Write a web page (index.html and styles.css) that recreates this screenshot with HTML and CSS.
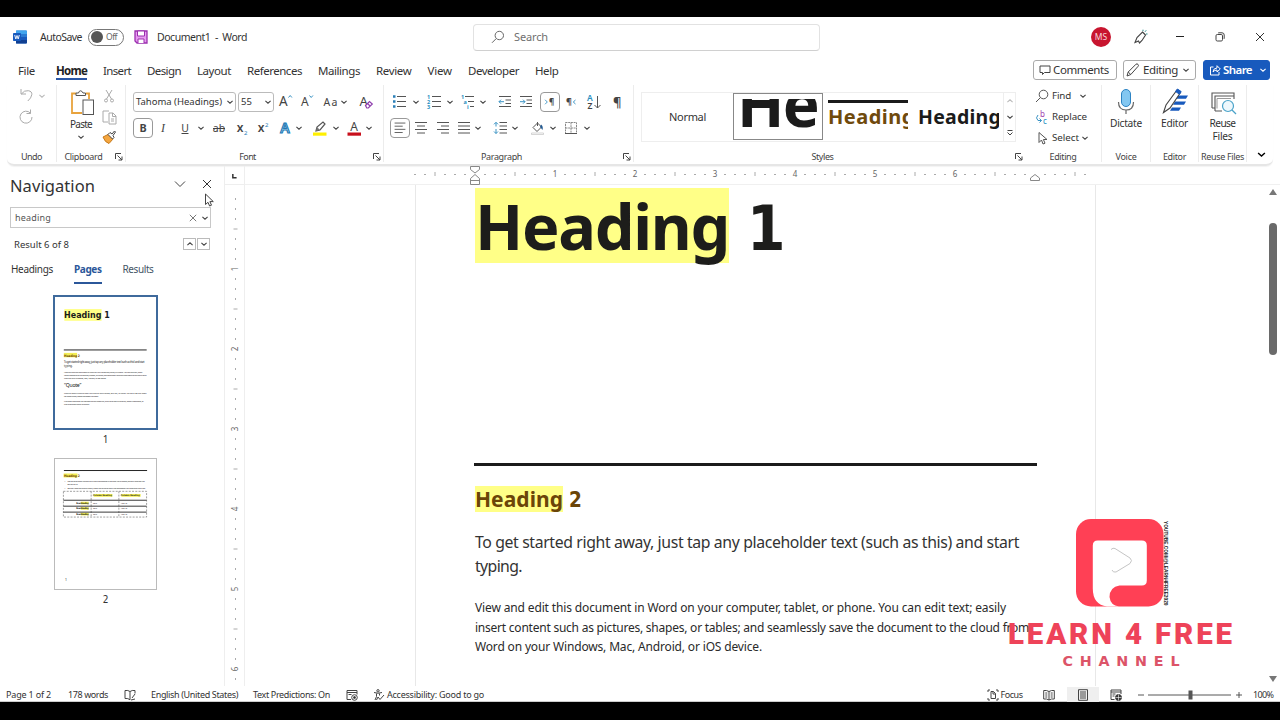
FILE: index.html
```html
<!DOCTYPE html>
<html lang="en">
<head>
<meta charset="utf-8">
<title>Document1 - Word</title>
<link rel="stylesheet" href="styles.css">
</head>
<body>
<svg class="sprite" aria-hidden="true">
  <symbol id="chev" viewBox="0 0 10 10"><path d="M2.4 3.8 5 6.2 7.6 3.8" fill="none" stroke="currentColor" stroke-width="1.1"/></symbol>
  <symbol id="launch" viewBox="0 0 10 10"><path d="M1.5 7V1.5H7M3.5 3.5 8 8M8 4.5V8H4.5" fill="none" stroke="#444" stroke-width="1"/></symbol>
  <symbol id="x" viewBox="0 0 10 10"><path d="M1 1 9 9M9 1 1 9" fill="none" stroke="currentColor" stroke-width="1"/></symbol>
</svg>
<div class="window">
  <header class="titlebar">
    <svg class="wordlogo" viewBox="0 0 14 14"><rect x="3" y="0.5" width="11" height="13" rx="1" fill="#2b7cd3"/><path d="M3 .5h10a1 1 0 0 1 1 1V4H3z" fill="#41a5ee"/><path d="M3 10h11v2.500a1 1 0 0 1-1 1H3z" fill="#103f91"/><path d="M3 7h11v3H3z" fill="#185abd"/><rect y="3" width="8" height="8" rx=".8" fill="#185abd"/><path d="M1.700 5 2.800 9 4 5.500 5.200 9 6.300 5" fill="none" stroke="#fff" stroke-width=".9"/></svg>
    <span class="autosave"><b data-w="42">AutoSave</b></span>
    <span class="toggle"><i></i><b data-w="11">Off</b></span>
    <svg class="save" viewBox="0 0 14 14"><path d="M1 1h12v12H3L1 11z" fill="#e79af0" stroke="#9a2fae" stroke-width="1.300"/><path d="M3.500 1h7v5h-7z" fill="#fff" stroke="#9a2fae"/><path d="M4 13V9h6v4" fill="#fff" stroke="#9a2fae"/></svg>
    <span class="docname"><b data-w="90">Document1&nbsp; -&nbsp; Word</b></span>
    <div class="search"><svg viewBox="0 0 14 14"><circle cx="8.300" cy="5.500" r="4.200"/><path d="M5.200 8.600 1 12.800"/></svg><b data-w="34">Search</b></div>
    <span class="avatar">MS</span>
    <svg class="pen" viewBox="0 0 16 16"><path d="M2 13.500 4 8.500 9.500 3l3 3L9 11.500 6.500 14 5.500 12zM9.500 3 12.500 6M2 13.500l3.500-1.500" fill="none" stroke="#444" stroke-width="1.100"/><path d="M10 2V.7M12 2.800l1.200-1.500M13 5h1.500" stroke="#2a8a8a" fill="none"/></svg>
    <svg class="wmin" viewBox="0 0 10 10"><path d="M1 4.500h8" stroke="#222"/></svg>
    <svg class="wmax" viewBox="0 0 10 10"><rect x="1" y="2.500" width="6.500" height="6.500" rx="1.300"/><path d="M3 1.200q.3-.4 1-.4h3q2.200 0 2.200 2.200v3q0 .7-.5 1"/></svg>
    <svg class="wclose" viewBox="0 0 10 10"><use href="#x"/></svg>
  </header>

  <nav class="tabs">
    <span><b data-w="17">File</b></span><span class="on"><b data-w="31">Home</b></span><span><b data-w="28">Insert</b></span><span><b data-w="34">Design</b></span><span><b data-w="34">Layout</b></span><span><b data-w="55">References</b></span><span><b data-w="42">Mailings</b></span><span><b data-w="35.500">Review</b></span><span><b data-w="24.500">View</b></span><span><b data-w="51">Developer</b></span><span><b data-w="23.500">Help</b></span>
    <div class="actions">
      <span class="btn comments"><svg viewBox="0 0 12 12"><path d="M1 2h10v6.500H5.500L3.500 10.500v-2H1z"/></svg><b data-w="56">Comments</b></span>
      <span class="btn editing"><svg viewBox="0 0 14 14"><path d="M1 13l1.200-4L10 1.200q1-.8 2 .2t0 2L4.800 11.500zM2.200 9l2.600 2.500"/></svg><b data-w="35">Editing</b><svg class="c"><use href="#chev"/></svg></span>
      <span class="btn share"><svg viewBox="0 0 12 12"><path d="M4.500 3H1.500v8h8.500V8M4 8q.3-4 4-4V1.700L11.300 5 8 8V6Q5.500 6 4 8z"/></svg><b data-w="29">Share</b><svg class="c"><use href="#chev"/></svg></span>
    </div>
  </nav>

  <section class="ribbon">
    <div class="group undo">
      <div class="area">
        <div class="undorow"><svg class="i" viewBox="0 0 20 20"><path d="M5 3v5h5M5.300 8q3-4 7-3.300t3.500 4-4 6.300" class="lt"/></svg><svg class="c lightc"><use href="#chev"/></svg></div>
        <svg class="i" viewBox="0 0 20 20"><path d="M14.500 3.500v4h-4M14.500 7.200A6 6 0 1 0 16 11" class="lt"/></svg>
      </div>
      <footer><b data-w="21">Undo</b></footer>
    </div>
    <div class="group clip">
      <div class="area">
        <div class="paste">
          <svg viewBox="0 0 24 26"><path d="M5 3.500H1V23h10M15 3.500h3V9" fill="none" stroke="#e8a33d" stroke-width="1.800"/><path d="M5 5.500V3h2.500Q8 .8 9.500.8T12 3h2.500v2.500z" fill="#fff" stroke="#555"/><rect x="12" y="10" width="10.500" height="14.500" fill="#fff" stroke="#555"/></svg>
          <b data-w="22">Paste</b><svg class="c"><use href="#chev"/></svg>
        </div>
        <div class="cliptools">
          <svg class="i" viewBox="0 0 20 20"><path d="M7 4l5.500 9M13 4 7.500 13" class="lt"/><circle cx="7" cy="14.500" r="1.500" class="lt"/><circle cx="13" cy="14.500" r="1.500" class="lt"/></svg>
          <svg class="i" viewBox="0 0 20 20"><path d="M9 15H4V4h6M10 6h4l3 3v8h-7zM13.500 6v3.500H17M12 12h3M12 14h3" class="lt"/></svg>
          <svg class="i" viewBox="0 0 20 20"><path d="M4 10l6-3 4 5-4 4.500q-4-1-6-6.500z" fill="#f4a640" stroke="#c77a1a"/><path d="M9 7.500l2-2 2 1.500 2.500-3 1 1L14 8.500l1 2-1.500 1.500z" fill="#fff" stroke="#444"/></svg>
        </div>
      </div>
      <footer><b data-w="38">Clipboard</b><svg class="l"><use href="#launch"/></svg></footer>
    </div>
    <div class="group font">
      <div class="area">
        <div class="r font1">
          <span class="combo"><b data-w="86">Tahoma (Headings)</b><svg class="c"><use href="#chev"/></svg></span>
          <span class="combo small"><b data-w="11">55</b><svg class="c"><use href="#chev"/></svg></span>
          <svg class="i" viewBox="0 0 20 20"><text x="3" y="14" class="g14">A</text><path d="M12.500 5.500l1.700-2 1.700 2" class="bl"/></svg>
          <svg class="i" viewBox="0 0 20 20"><text x="4" y="14" class="g12">A</text><path d="M12.500 3.500l1.700 2 1.700-2" class="bl"/></svg>
          <svg class="i" viewBox="0 0 20 20"><text x="3.500" y="14" class="g11" textLength="14">Aa</text></svg>
          <svg class="c"><use href="#chev"/></svg>
          <svg class="i" viewBox="0 0 20 20"><text x="3.500" y="14" class="g13">A</text><path d="M9.500 13.500l4-4 2.800 2.500-4 4h-1.500zM11.500 11.500l2.800 2.700" fill="#fff" stroke="#8f3fae" stroke-width="1.200"/></svg>
        </div>
        <div class="r font2">
          <svg class="i box" viewBox="0 0 20 20"><text x="10" y="14" class="g12 bold mid">B</text></svg>
          <svg class="i" viewBox="0 0 20 20"><text x="10" y="14" class="g12 it mid">I</text></svg>
          <svg class="i" viewBox="0 0 20 20"><text x="10" y="13.500" class="g11 mid">U</text><path d="M6.500 15.500h7" stroke="#444"/></svg>
          <svg class="c"><use href="#chev"/></svg>
          <svg class="i" viewBox="0 0 20 20"><text x="10" y="14" class="g11 mid">ab</text><path d="M4 10.500h12" stroke="#444"/></svg>
          <svg class="i" viewBox="0 0 20 20"><text x="8" y="14" class="g12 semi mid">x</text><text x="12" y="17" class="tinyb">2</text></svg>
          <svg class="i" viewBox="0 0 20 20"><text x="8" y="14" class="g12 semi mid">x</text><text x="12" y="9" class="tinyb">2</text></svg>
          <svg class="i" viewBox="0 0 20 20"><text x="10" y="15" class="fx mid">A</text></svg>
          <svg class="c"><use href="#chev"/></svg>
          <svg class="i" viewBox="0 0 20 20"><path d="M6 13l1-4 6-5 2 2-5 6z" fill="none" stroke="#555" stroke-width="1.200"/><path d="M6 13l1-4 3 3z" fill="#777"/><path d="M3 14.500h13.500v3.200H3z" fill="#ffef00"/></svg>
          <svg class="c"><use href="#chev"/></svg>
          <svg class="i" viewBox="0 0 20 20"><text x="10" y="13" class="g12 mid">A</text><path d="M3.500 14.500H17v3.200H3.500z" fill="#c8101c"/></svg>
          <svg class="c"><use href="#chev"/></svg>
        </div>
      </div>
      <footer><b data-w="16.500">Font</b><svg class="l"><use href="#launch"/></svg></footer>
    </div>
    <div class="group para">
      <div class="area">
        <div class="r para1">
          <svg class="i" viewBox="0 0 20 20"><path d="M8 4.500h9M8 9.500h9M8 14.500h9" class="dk"/><path d="M4 3.300h2.500v2.500H4zM4 8.300h2.500v2.500H4zM4 13.300h2.500v2.500H4z" fill="#2a7fb8"/></svg>
          <svg class="c"><use href="#chev"/></svg>
          <svg class="i" viewBox="0 0 20 20"><path d="M8 4.500h9M8 9.500h9M8 14.500h9" class="dk"/><text x="3" y="6.500" class="num">1</text><text x="3" y="11.500" class="num">2</text><text x="3" y="16.500" class="num">3</text></svg>
          <svg class="c"><use href="#chev"/></svg>
          <svg class="i" viewBox="0 0 20 20"><path d="M7 4.500h9M10 9.500h6M12 14.500h4" class="dk"/><text x="3" y="6.500" class="num">1</text><text x="5.500" y="11.500" class="num">a</text><text x="9" y="16.500" class="num">i</text></svg>
          <svg class="c"><use href="#chev"/></svg>
          <svg class="i" viewBox="0 0 20 20"><path d="M4 4.500h12M10.500 8H16M10.500 11.500H16M4 14.500h12" class="dk"/><path d="M9 9.700H4M6 7.700l-2 2 2 2" class="bl"/></svg>
          <svg class="i" viewBox="0 0 20 20"><path d="M4 4.500h12M10.500 8H16M10.500 11.500H16M4 14.500h12" class="dk"/><path d="M4 9.700h5M7 7.700l2 2-2 2" class="bl"/></svg>
          <svg class="i box" viewBox="0 0 20 20"><path d="M4.500 7.500 7 10l-2.500 2.500" class="bl"/><text x="9" y="13" class="pil">¶</text></svg>
          <svg class="i" viewBox="0 0 20 20"><text x="5" y="13" class="pil">¶</text><path d="M14.500 8 12.300 10l2.200 2" class="bl"/></svg>
          <svg class="i" viewBox="0 0 20 20"><text x="3" y="9" class="sort b">A</text><text x="3.500" y="17" class="sort">Z</text><path d="M13.500 4v12M10.500 13l3 3 3-3" class="dk"/></svg>
          <svg class="i" viewBox="0 0 20 20"><text x="6" y="14.500" class="pilbig">¶</text></svg>
        </div>
        <div class="r para2">
          <svg class="i box" viewBox="0 0 20 20"><path d="M4 4.500h12M4 8h9M4 11.500h12M4 15h9" class="dk"/></svg>
          <svg class="i" viewBox="0 0 20 20"><path d="M4 4.500h12M6 8h8M4 11.500h12M6 15h8" class="dk"/></svg>
          <svg class="i" viewBox="0 0 20 20"><path d="M4 4.500h12M8 8h8M4 11.500h12M8 15h8" class="dk"/></svg>
          <svg class="i" viewBox="0 0 20 20"><path d="M4 4.500h12M4 8h12M4 11.500h12M4 15h12" class="dk"/></svg>
          <svg class="c"><use href="#chev"/></svg>
          <svg class="i" viewBox="0 0 20 20"><path d="M9.500 4.500H17M9.500 8H17M9.500 11.500H17M9.500 15H17" class="dk"/><path d="M6 4.500v4M6 11v4.500M4 6.300 6 4.300l2 2M4 13.500l2 2 2-2" class="bl"/></svg>
          <svg class="c"><use href="#chev"/></svg>
          <svg class="i" viewBox="0 0 20 20"><path d="M6 9.500 10.500 5l4 4-4.500 4.500zM10.500 8V4" class="dk"/><path d="M14 6.500q2.500 1.500 1.500 5.500-1.500-2-2.500-3z" fill="#235a92"/><path d="M4.500 15h12v1.500h-12z" fill="#fff" stroke="#bbb" stroke-width=".6"/></svg>
          <svg class="c"><use href="#chev"/></svg>
          <svg class="i" viewBox="0 0 20 20"><path d="M4.500 4.500h11v11h-11zM10 4.500v11M4.500 10h11" fill="none" stroke="#888" stroke-dasharray="2 .7"/><path d="M4 15.500h12" class="dk"/></svg>
          <svg class="c"><use href="#chev"/></svg>
        </div>
      </div>
      <footer><b data-w="41">Paragraph</b><svg class="l"><use href="#launch"/></svg></footer>
    </div>
    <div class="group styles">
      <div class="gallery">
        <span class="normal"><b data-w="37">Normal</b></span>
        <span class="h1s"><em><b data-w="81">He</b></em></span>
        <span class="h2s"><em><b data-w="87">Heading</b></em></span>
        <span class="h3s"><em><b data-w="83">Heading</b></em></span>
        <span class="scroll"><svg class="c lightc up"><use href="#chev"/></svg><svg class="c"><use href="#chev"/></svg><svg class="c more" viewBox="0 0 10 10"><path d="M2.500 2.500h5M2.500 4.500 5 7l2.500-2.500" fill="none" stroke="#444"/></svg></span>
      </div>
      <footer><b data-w="22">Styles</b><svg class="l"><use href="#launch"/></svg></footer>
    </div>
    <div class="group edit">
      <div class="area">
        <span><svg viewBox="0 0 14 14"><circle cx="8.500" cy="5.500" r="4.300"/><path d="M5.500 8.500 1 13"/></svg><b data-w="19">Find</b><svg class="c far"><use href="#chev"/></svg></span>
        <span><svg viewBox="0 0 14 14"><text x="5" y="7" class="rb">b</text><text x="8" y="13.500" class="rc">c</text><path d="M3 5Q0 8 3 10.500h3.500M4.500 8.500l2 2-2 2" class="bl"/></svg><b data-w="35">Replace</b></span>
        <span><svg viewBox="0 0 14 14"><path d="M4 1.500v10l2.500-2.500 1.500 4 2-.8-1.600-3.700H12z"/></svg><b data-w="27">Select</b><svg class="c"><use href="#chev"/></svg></span>
      </div>
      <footer><b data-w="27">Editing</b></footer>
    </div>
    <div class="group big dict"><div class="area"><svg viewBox="0 0 28 28"><path d="M6.500 14q0 8 7.500 8t7.500-8M14 22v4" fill="none" stroke="#666" stroke-width="1.200"/><rect x="9.500" y="1.500" width="9" height="17" rx="4.500" fill="#83c7f1" stroke="#2c83c3"/></svg><b data-w="32">Dictate</b></div><footer><b data-w="21">Voice</b></footer></div>
    <div class="group big edr"><div class="area"><svg viewBox="0 0 28 28"><path d="M17 7.500h10l-2 3.200H15zM14 13.500h11l-2 3.200H12zM11 19.500h9l-2 3.200H9z" fill="#185abd"/><path d="M2.500 24.500 5 17 16 2l3.500 2.500L9 20z" fill="#fff" stroke="#444" stroke-width="1.100"/><path d="M14.500 3.500 16.500 1l3.700 2.600-1.700 2.600z" fill="#185abd" stroke="#185abd"/></svg><b data-w="27">Editor</b></div><footer><b data-w="23">Editor</b></footer></div>
    <div class="group big reuse"><div class="area"><svg viewBox="0 0 28 28"><path d="M3 20V5h22v6M6 23V8h19M3 20h3M6 23h7" fill="none" stroke="#555" stroke-width="1.100"/><path d="M8 20.500V10.500h14" stroke="#999" fill="none"/><circle cx="19" cy="18" r="5.500" fill="#eef8fd" stroke="#4aa3c9" stroke-width="1.200"/><path d="M23 22l4 4" stroke="#4aa3c9" stroke-width="1.200"/></svg><b data-w="26">Reuse</b><b data-w="20">Files</b></div><footer><b data-w="43">Reuse Files</b></footer></div>
    <div class="collapse"><svg class="c"><use href="#chev"/></svg></div>
  </section>

  <main>
    <aside class="nav">
      <div class="navhead"><b data-w="85">Navigation</b><svg class="nchev" viewBox="0 0 12 12"><path d="M1 3.500l5 5 5-5"/></svg><svg class="nx" viewBox="0 0 10 10"><use href="#x"/></svg></div>
      <div class="find"><b data-w="36">heading</b><svg class="fx1" viewBox="0 0 10 10"><use href="#x"/></svg><svg class="c"><use href="#chev"/></svg></div>
      <div class="result"><b data-w="55">Result 6 of 8</b><i><svg class="c up"><use href="#chev"/></svg></i><i><svg class="c"><use href="#chev"/></svg></i></div>
      <div class="navtabs"><span><b data-w="42">Headings</b></span><span class="on"><b data-w="27.500">Pages</b></span><span><b data-w="31">Results</b></span></div>
      <svg class="thumb sel" viewBox="0 0 103 133">
        <rect x="9.500" y="12" width="38" height="12" fill="#ffff87"/><text x="9.300" y="21.300" class="tb" font-size="9.400" textLength="46.500" lengthAdjust="spacingAndGlyphs">Heading 1</text>
        <path d="M9 53.700h84.500" stroke="#222"/>
        <rect x="9" y="56.700" width="13.500" height="4.500" fill="#f4ee55"/><text x="9.300" y="60.400" class="tb h" font-size="3.400" textLength="16">Heading 2</text>
        <g class="tt" font-size="2.700"><text x="9.300" y="67.400" textLength="82">To get started right away, just tap any placeholder text (such as this) and start</text><text x="9.300" y="70.900">typing.</text></g>
        <g class="tt soft" font-size="2"><text x="9.300" y="76.900" textLength="80">View and edit this document in Word on your computer, tablet, or phone. You can edit text; easily</text><text x="9.300" y="79.900" textLength="84">insert content such as pictures, shapes, or tables; and seamlessly save the document to the cloud from</text><text x="9.300" y="82.900" textLength="43">Word on your Windows, Mac, Android, or iOS device.</text></g>
        <text x="9.300" y="91" class="tt" font-size="5.200" textLength="17.500">“Quote”</text>
        <g class="tt soft" font-size="2"><text x="9.300" y="98.900" textLength="84">Want to insert a picture from your files or add a shape, text box, or table? You got it! On the Insert</text><text x="9.300" y="101.900" textLength="35">tab of the ribbon, just tap the option you need.</text><text x="9.300" y="106.400" textLength="81">Find even more easy-to-use tools on the Insert tab, such as to add a hyperlink, insert a comment, or</text><text x="9.300" y="109.400" textLength="26">add automatic page numbers.</text></g>
      </svg>
      <div class="pn">1</div>
      <svg class="thumb" viewBox="0 0 102 131">
        <path d="M9 11.500h84" stroke="#222"/>
        <rect x="8.700" y="14.500" width="14" height="4" fill="#f4ee55"/><text x="9" y="17.800" class="tb h" font-size="3.400" textLength="16">Heading 2</text>
        <g class="tt soft" font-size="2"><text x="9.500" y="23.500">•</text><text x="12.500" y="23.500" textLength="78">Use styles to easily format your Word documents in no time. For example, this text uses the List</text><text x="12.500" y="26.200">Bullet style.</text><text x="9.500" y="30.200">•</text><text x="12.500" y="30.200" textLength="79">On the Home tab of the ribbon, check out Styles to apply the formatting you want with just a tap.</text></g>
        <g fill="#f4ee55"><rect x="39" y="35.200" width="19" height="2.800"/><rect x="67" y="35.200" width="19.500" height="2.800"/><rect x="26" y="43" width="8" height="2.600"/><rect x="26" y="48.500" width="8" height="2.600"/><rect x="26" y="54.200" width="8" height="2.600"/></g>
        <path d="M8.500 32.500h84v26H8.500zM36.500 32.500v26M64.500 32.500v26" fill="none" stroke="#777" stroke-width=".7" stroke-dasharray="2 1.300"/>
        <path d="M8.500 41.500h84M8.500 47.500h84M8.500 53.500h84" stroke="#222" stroke-width=".9"/>
        <g class="tb" font-size="2.300"><text x="38.500" y="37.500" textLength="19">Column Heading</text><text x="66.500" y="37.500" textLength="19">Column Heading</text><text x="21.500" y="45" textLength="12.500">Row Heading</text><text x="21.500" y="50.500" textLength="12.500">Row Heading</text><text x="21.500" y="56.200" textLength="12.500">Row Heading</text></g>
        <g class="tt soft" font-size="2.100"><text x="38.500" y="45">Text</text><text x="66.500" y="45">123.45</text><text x="38.500" y="50.500">Text</text><text x="66.500" y="50.500">123.45</text><text x="38.500" y="56.200">Text</text><text x="66.500" y="56.200">123.45</text><text x="10" y="123.500" font-size="3.500">1</text></g>
      </svg>
      <div class="pn two">2</div>
      <svg class="cursor" viewBox="0 0 12 15"><path d="M1.500 1v10.500l2.500-2.200 1.600 3.700 1.900-.8-1.600-3.600h3.400z" fill="#fff" stroke="#444"/></svg>
    </aside>
    <div class="vruler"><span class="tabsel"><svg viewBox="0 0 6 6"><path d="M1 0v4.500h4.500" fill="none" stroke="#333" stroke-width="1.800"/></svg></span><svg id="vr" width="20" height="501"></svg></div>
    <div class="canvas">
      <div class="hruler"><svg id="hr" width="1035" height="20"></svg></div>
      <article class="page">
        <h1><span class="mark"><b data-w="254">Heading</b></span><b class="one">1</b></h1>
        <div class="rule"></div>
        <h2><span class="mark"><b data-w="88">Heading</b></span><b class="two">2</b></h2>
        <p class="lead"><b data-w="544">To get started right away, just tap any placeholder text (such as this) and start</b><br><b data-w="47">typing.</b></p>
        <p class="text"><b data-w="531">View and edit this document in Word on your computer, tablet, or phone. You can edit text; easily</b><br><b data-w="554">insert content such as pictures, shapes, or tables; and seamlessly save the document to the cloud from</b><br><b data-w="287">Word on your Windows, Mac, Android, or iOS device.</b></p>
      </article>
      <div class="vscroll"><i class="ua"></i><i class="th"></i><i class="da"></i></div>
    </div>
  </main>

  <footer class="status">
    <b data-w="45">Page 1 of 2</b><b data-w="40">178 words</b>
    <svg viewBox="0 0 12 12"><path d="M6 2.500Q4 1 1 1.500v8q3-.5 5 1.300V2.500Q8 1 11 1.500v3M8 9l3-4M7 11l4-1"/></svg>
    <b data-w="87">English (United States)</b><b data-w="77">Text Predictions: On</b>
    <svg viewBox="0 0 12 12"><path d="M5 10.500H1V1.500h10v4M1 3.500h10M2.500 5.500h3"/><circle cx="8.500" cy="8.500" r="2.800"/><circle cx="8.500" cy="8.500" r="1" fill="#333"/></svg>
    <svg viewBox="0 0 12 12"><circle cx="5" cy="1.800" r="1.200"/><path d="M1 3.500q4 1.500 8 0M3.500 4.500v3L2 11M6.500 4.500v2M5 8l2 2.500 4-4.500M5 8l-1.500 3"/></svg>
    <b data-w="97">Accessibility: Good to go</b>
    <div class="views">
      <svg viewBox="0 0 12 12"><path d="M3 1H1v2M9 1h2v2M1 9v2h2M11 9v2H9M4 2.500h2.500L8.500 4.500V9.500H4zM6 2.500V5h2.500"/></svg><b data-w="22">Focus</b>
      <svg class="v2" viewBox="0 0 12 12"><path d="M6 2.500Q3.500 1 .7 1.500v8.500q3-.5 5.300 1 2.300-1.500 5.300-1V1.500Q8.500 1 6 2.500V11M2.300 4h2M2.300 6h2M2.300 8h2M7.700 4h2M7.700 6h2M7.700 8h2"/></svg>
      <span class="print"><svg viewBox="0 0 12 12"><path d="M1.500.7h9v10.600h-9zM3 3h6M3 5h6M3 7h6M3 9h6"/></svg></span>
      <svg class="v3" viewBox="0 0 12 12"><path d="M4.500 10.500H1V1h10v4M1 3h10M2.500 5h3M2.500 7h2"/><circle cx="8.500" cy="8.500" r="3" fill="#333"/><path d="M5.500 8.500h6M8.500 5.500v6" stroke="#fff" stroke-width=".6"/></svg>
      <svg class="zoom" viewBox="0 0 104 12"><path d="M0 6h6M10 6h83M98 6h6M101 3v6" stroke-width=".9"/><path d="M50.500 1.500h4v9h-4z" fill="#555" stroke="none"/></svg>
      <b data-w="20.500">100%</b>
    </div>
  </footer>
</div>
<svg class="channel" viewBox="0 0 230 160">
  <rect x="70" y="6" width="87.500" height="87.500" rx="15" fill="#ff4055"/>
  <path d="M86.800 32.500q0-5 5-5h44q5 0 5 5v35q0 5-5 5H113.500q-9.800 1.500-10 11.500 1 8.500 9.500 9.500H101q-14.200-2-14.200-18z" transform="matrix(1 0 0 1 0 0)" fill="#fff"/>
  <path d="M105 36.500q2-2 4-1l15 9.500q3 2.500 0 5.500l-14 8.500q-3 .8-4-2" fill="none" stroke="#c5c5c5"/>
  <text transform="translate(158 8) rotate(90)" class="yt" textLength="84.500" lengthAdjust="spacingAndGlyphs">YOUTUBE.COM/@LEARN4FREE2020</text>
  <text x="2" y="131.300" class="l4" textLength="224">LEARN 4 FREE</text>
  <text x="56.500" y="153" class="ch" textLength="117">CHANNEL</text>
</svg>
<script src="app.js"></script>
</body>
</html>
```
FILE: styles.css
```css
* { box-sizing: border-box; }
body { margin: 0; width: 1280px; height: 720px; overflow: hidden; background: #000; padding: 17px 0 18px; font: 12px/16px "Noto Sans", "Open Sans", sans-serif; color: #333; }
b { font-weight: inherit; white-space: nowrap; display: inline-block; }
svg { flex: none; display: block; overflow: visible; }
.sprite { position: absolute; width: 0; height: 0; }
.window { height: 685px; background: #fff; display: flex; flex-direction: column; }
.i { width: 20px; height: 20px; }
.c { width: 10px; height: 10px; color: #444; }
.l { width: 10px; height: 10px; }
.lightc { color: #bbb; }
.up { transform: rotate(180deg); }

/* title bar */
.titlebar { height: 40px; display: flex; align-items: center; padding-left: 13px; font-size: 10.500px; }
.titlebar svg { fill: none; stroke: #444; }
.titlebar .wordlogo { width: 14px; height: 14px; stroke: none; }
.titlebar .wordlogo path:last-child { stroke: #fff; }
.autosave { width: 61px; padding-left: 13px; }
.toggle { width: 36px; height: 17px; border: 1px solid #777; border-radius: 9px; display: flex; align-items: center; padding-left: 2px; gap: 3px; font-size: 8.500px; color: #666; }
.toggle i { width: 12px; height: 12px; border-radius: 50%; background: #555; }
.save { width: 14px; height: 14px; margin: 0 9px 0 10px; }
.docname { width: 316px; }
.search { width: 347px; height: 27px; border: 1px solid #e2e2e2; border-bottom-color: #d0d0d0; border-radius: 4px; display: flex; align-items: center; padding-left: 17px; gap: 9px; font-size: 11px; color: #707070; }
.search svg { width: 14px; height: 14px; stroke: #666; }
.avatar { margin-left: 271px; width: 20px; height: 20px; border-radius: 50%; background: #c8152f; color: #f6d5da; font-size: 8.500px; line-height: 20px; text-align: center; }
.pen { width: 16px; height: 16px; margin-left: 22px; }
.wmin { width: 10px; height: 10px; margin-left: 26px; }
.wmax { width: 10px; height: 10px; margin-left: 30px; }
.wclose { width: 10px; height: 10px; margin-left: 30px; color: #333; }

/* tabs */
.tabs { height: 28px; display: flex; padding-left: 18px; gap: 16px; font-size: 11.500px; line-height: 27px; }
.tabs > span { height: 23px; flex: none; }
.tabs > span:first-child { margin-right: 5px; }
.tabs .on { font-weight: 700; color: #222; border-bottom: 2px solid #2b57a5; }
.actions { margin: 3px 10px 0 auto; display: flex; gap: 6px; line-height: 18px; font-size: 11.500px; }
.btn { height: 20px; border: 1px solid #aaa; border-radius: 3px; display: flex; align-items: center; }
.btn svg { fill: none; stroke: #444; width: 12px; height: 12px; }
.btn svg.c { width: 10px; height: 10px; }
.comments { width: 84px; padding-left: 5px; gap: 2px; }
.editing { width: 73px; padding-left: 2px; gap: 3px; }
.editing svg:first-child { width: 14px; height: 14px; }
.editing .c, .share .c { margin-left: auto; margin-right: 4px; }
.share { width: 67px; margin-left: 1px; background: #185abd; border-color: #185abd; color: #fff; padding-left: 5px; gap: 2px; font-weight: 600; }
.share svg { stroke: #fff; color: #fff; }
.share .c { margin-right: 1px; }

/* ribbon */
.ribbon { height: 81px; margin: 0 7px; display: flex; border-bottom: 2px solid #e6e6e6; border-radius: 0 0 7px 7px; box-shadow: 0 1px 1px #f3f3f3; }
.group { height: 77px; border-right: 1px solid #ececec; display: flex; flex-direction: column; justify-content: space-between; flex: none; }
.group > footer { height: 13px; line-height: 13px; font-size: 9px; text-align: center; position: relative; margin-bottom: -1px; color: #444; }
.group > footer .l { position: absolute; right: 1px; top: 2px; }
.undo { width: 50px; }
.undo .area { padding: 1px 0 0 9px; }
.undorow { display: flex; align-items: center; gap: 1px; }
.lt { fill: none; stroke: #aaa; stroke-width: 1; }
.dk { fill: none; stroke: #555; stroke-width: 1; }
.bl { fill: none; stroke: #3a93c4; stroke-width: 1; }
.clip { width: 69px; }
.clip > footer { padding-right: 15px; }
.clip .area { display: flex; padding-left: 11px; }
.paste { width: 26px; display: flex; flex-direction: column; align-items: center; font-size: 10px; padding-top: 5px; }
.paste > svg:first-child { width: 24px; height: 26px; margin-left: 3px; }
.cliptools { margin-left: 5px; padding-top: 1px; }
.cliptools .i { margin-bottom: .5px; }
.r { display: grid; height: 20px; align-items: center; }
.font { width: 258px; }
.font .area, .para .area { padding-top: 7px; display: flex; flex-direction: column; gap: 6px; }
.font > footer { padding-right: 14px; }
.font1 { padding-left: 7px; grid-template-columns: 105px 38px 21px 23px 19px 17px 20px; }
.font2 { padding-left: 7px; grid-template-columns: 20px 22px 21px 13px 23px 21px 22px 19px 16px 21px 13px 20px 10px; }
.combo { width: 103px; height: 20px; border: 1px solid #bbb; border-radius: 3px; display: flex; align-items: center; padding-left: 2px; font-size: 9.500px; justify-content: space-between; }
.combo.small { width: 36px; }
.box { border: 1px solid #999; border-radius: 4px; }
.g14 { font-size: 13.500px; } .g13 { font-size: 13px; } .g12 { font-size: 12px; } .g11 { font-size: 10.500px; }
svg text { fill: #444; }
.mid { text-anchor: middle; }
.bold { font-weight: 700; } .semi { font-weight: 600; } .it { font-style: italic; font-family: "Liberation Serif", serif; }
svg text.tinyb { font-size: 6px; fill: #2a7fb8; }
svg text.fx { font-size: 14px; font-weight: 600; fill: #cfe8f8; stroke: #2079b5; stroke-width: 1.100; }
svg text.num { font-size: 5.500px; fill: #2a8fc0; font-weight: 700; }
svg text.pil { font-size: 9px; font-weight: 700; }
svg text.pilbig { font-size: 13px; font-weight: 600; }
svg text.sort { font-size: 8.500px; font-weight: 600; } svg text.sort.b { fill: #2a8fc0; }
.para { width: 250px; }
.para > footer { padding-right: 14px; }
.para1 { padding-left: 5px; grid-template-columns: 22px 13px 21px 13px 20px 17px 21px 24px 21px 23px 23px 20px; }
.para2 { padding-left: 6px; grid-template-columns: 21px 22px 21px 19px 17px 20px 17px 21px 13px 21px 10px; }
.styles { width: 391px; border-right: 0; }
.styles > footer { padding-right: 14px; }
.gallery { margin: 7px 0 0 7px; width: 375px; height: 50px; border: 1px solid #eee; display: flex; }
.gallery > span { flex: none; overflow: hidden; }
.gallery em { font-style: normal; display: block; overflow: hidden; }
.normal { width: 91px; text-align: center; line-height: 48px; font-size: 11px; }
.h1s { width: 90px; height: 47px; border: 1px solid #888; font: bold 62px/8px "Noto Sans", sans-serif; color: #1b1b1b; padding: 5px 4px 0 3px; }
.h1s em { height: 34px; }
.h2s { width: 90px; font: bold 20px/24px "Noto Sans", sans-serif; color: #6f4a0c; padding: 7px 5px 0 5px; }
.h2s em { border-top: 3px solid #1b1b1b; padding-top: 2px; width: 80px; height: 31px; }
.h3s { width: 90px; font: bold 19.500px/24px "Noto Sans", sans-serif; color: #1b1b1b; padding: 12px 3px 0 5px; }
.h3s em { width: 81px; }
.scroll { width: 12px; display: flex; flex-direction: column; justify-content: space-around; align-items: center; border-left: 1px solid #eee; }
.edit { width: 77px; }
.edit .area { padding: 0 0 0 10px; font-size: 9.800px; }
.edit .area span { display: flex; align-items: center; height: 21.200px; gap: 3px; }
.edit .area svg { width: 14px; height: 14px; fill: none; stroke: #555; }
.edit .area svg.c { width: 10px; height: 10px; margin-left: -2px; }
.edit .area svg.far { margin-left: 4px; }
svg text.rb { font-size: 8px; fill: #a03fb0; stroke: none; } svg text.rc { font-size: 8px; fill: #2a8fc0; stroke: none; }
.edit .area .bl { stroke: #3a93c4; }
.big { width: 48px; }
.dict { width: 49px; }
.big .area { display: flex; flex-direction: column; align-items: center; font-size: 10.200px; line-height: 13px; padding-top: 3px; }
.big .area svg { width: 28px; height: 28px; margin-bottom: 1px; }
.big .area { white-space: nowrap; }
.collapse { padding: 63px 0 0 8px; }
.collapse .c { width: 13px; height: 13px; color: #000; }

/* navigation pane */
main { height: 520px; display: flex; }
.nav { width: 225px; border-right: 1px solid #eee; padding: 9px 13px 0 10px; position: relative; flex: none; }
.navhead { height: 22px; display: flex; align-items: center; font-size: 16.500px; }
.nchev { width: 12px; height: 12px; margin-left: 79px; margin-top: -5px; fill: none; stroke: #444; }
.nx { width: 10px; height: 10px; margin: -5px 0 0 16px; }
.find { width: 201px; height: 21px; margin-top: 10px; border: 1px solid #c8c8c8; display: flex; align-items: center; padding-left: 4px; font-size: 9px; color: #555; }
.fx1 { width: 8px; height: 8px; margin: 0 3px 0 auto; }
.result { display: flex; height: 14px; margin: 9px 0 0 4px; align-items: center; font-size: 9.500px; width: 196px; gap: 1px; }
.result b { margin-right: auto; padding-top: 2px; }
.result i { width: 13px; height: 12px; border: 1px solid #bbb; display: grid; place-items: center; }
.navtabs { display: flex; margin: 9px 0 0 1px; gap: 21px; font-size: 10px; line-height: 18px; height: 24px; }
.navtabs .on { font-weight: 700; color: #2b579a; border-bottom: 2px solid #2b579a; }
.navtabs span:last-child { color: #456; }
.thumb { width: 103px; height: 132px; border: 1px solid #bbb; margin: 0 0 0 44px; }
.thumb.sel { border: 2px solid #3f6a9c; width: 105px; height: 135px; margin: 11px 0 0 43px; }
.pn { width: 103px; margin-left: 44px; text-align: center; font-size: 10px; line-height: 18px; height: 28px; }
.pn.two { padding-top: 1px; }
svg .tb, svg .tb text { font-family: "DejaVu Sans Condensed", "DejaVu Sans", sans-serif; font-weight: 700; fill: #1b1b1b; }
svg .tb.h { fill: #6f4a0c; }
svg .tt, svg .tt text { font-family: "Noto Sans", sans-serif; fill: #111; }
svg .soft text { fill: #222; }
.cursor { position: absolute; left: 204px; top: 27px; width: 12px; height: 15px; }

/* document */
.vruler { width: 20px; border-right: 1px solid #eee; flex: none; }
.tabsel { display: block; height: 19px; padding: 8px 0 0 7px; border-bottom: 1px solid #eee; }
.tabsel svg { width: 5px; height: 5px; }
#vr text, #hr text { font-size: 8px; fill: #666; text-anchor: middle; }
#vr path, #hr path { stroke: #aaa; fill: none; }
.canvas { flex: 1; position: relative; overflow: hidden; }
.hruler { height: 19px; border-bottom: 1px solid #f0f0f0; }
.page { margin-left: 170px; width: 681px; height: 501px; border: solid #e8e8e8; border-width: 0 1px; padding: 3px 0 0 59px; color: #333; }
h1, h2, p { margin: 0; font-weight: 400; }
h1 { font-size: 63px; line-height: 75px; font-weight: 700; color: #1d1d1b; display: flex; align-items: baseline; height: 75px; }
.mark { background: #ffff87; }
.one, .two { font-family: "DejaVu Sans Condensed", "DejaVu Sans", sans-serif; }
h1 .one { margin-left: 18px; font-size: 61.500px; }
.rule { height: 3px; width: 563px; background: #1b1b1b; margin: 200px 0 0 -1px; }
h2 { font-size: 21px; line-height: 26px; font-weight: 700; color: #6b4508; display: flex; align-items: baseline; height: 26px; margin-top: 20px; }
h2 .two { margin-left: 6px; font-size: 20.500px; }
.lead { font-size: 15.800px; line-height: 24px; margin-top: 18px; }
.text { font-size: 12px; line-height: 19.500px; margin-top: 20px; color: #2a2a2a; }
.vscroll { position: absolute; right: 3px; top: 0; width: 9px; height: 520px; display: flex; flex-direction: column; align-items: center; padding: 23px 0 4px; }
.ua { border: 4px solid transparent; border-top: 0; border-bottom: 6px solid #777; }
.th { width: 8px; height: 132px; border-radius: 4px; background: #6a6a6a; margin-top: 28px; }
.da { border: 4px solid transparent; border-bottom: 0; border-top: 6px solid #777; margin-top: auto; }

/* status bar */
.status { height: 16px; display: flex; align-items: center; padding: 3px 6.500px 0 6px; font-size: 9px; border-bottom: 1px solid #ccc; }
.status svg { width: 12px; height: 12px; fill: none; stroke: #444; }
.status > b:nth-child(2) { margin: 0 16px 0 17px; }
.status > b:nth-child(4) { margin-left: 15px; }
.status > b:nth-child(5) { margin: 0 16px 0 15px; }
.status > svg:nth-of-type(2) { margin-right: 15px; }
.status > svg:nth-of-type(3) { margin-right: 2px; }
.views { margin-left: auto; display: flex; align-items: center; }
.views b:nth-child(2) { margin-left: 2px; }
.v2 { margin-left: 20px; }
.print { width: 32px; height: 15px; background: #efefef; display: grid; place-items: center; margin: -1px 11px 0 12px; }
.zoom.zoom { width: 104px; margin: 0 11.500px 0 16px; }

/* channel badge */
.channel { position: absolute; left: 1006px; top: 513px; width: 230px; height: 160px; }
svg text.yt { font: bold 5.500px "Liberation Sans", sans-serif; fill: #222; }
svg text.l4 { font: 900 29.500px Roboto, sans-serif; fill: #ee4359; }
svg text.ch { font: 700 14.300px "DejaVu Sans", sans-serif; fill: #dc5468; }
```
FILE: app.js
```js
// Spread each label over its intended width.
document.querySelectorAll('b[data-w]').forEach(function (el) {
  var natural = el.getBoundingClientRect().width;
  el.style.letterSpacing = ((el.dataset.w - natural) / el.textContent.length).toFixed(3) + 'px';
});

// Rulers: 80px per inch, one tick each eighth.
var h = '';
for (var i = -6; i <= 61; i++) {
  var x = 230 + i * 10;
  if (i === 0 || i === 56) continue;
  if (i > 0 && i % 8 === 0) h += '<text x="' + x + '" y="11">' + i / 8 + '</text>';
  else h += i % 4 === 0 ? '<path d="M' + x + ' 6v4"/>' : '<path d="M' + (x - 1) + ' 8.5h2"/>';
}
h += '<path d="M225.500 .5h9v3l-4.500 3.500-4.500-3.500zM225.500 18.500v-6l4.500-4 4.500 4v6zM225.500 14.500h9" style="stroke:#888"/>';
h += '<path d="M785.500 14.500v-2.500l4.500-3.500 4.500 3.500v2.500z" style="stroke:#888"/>';
document.getElementById('hr').innerHTML = h;

var v = '';
for (var j = 1; j <= 49; j++) {
  var y = 4 + j * 10;
  if (j % 8 === 0) v += '<text transform="translate(13 ' + y + ') rotate(-90)">' + j / 8 + '</text>';
  else v += j % 4 === 0 ? '<path d="M8.5 ' + y + 'h4"/>' : '<path d="M10.500 ' + (y - 1) + 'v2"/>';
}
document.getElementById('vr').innerHTML = v;
```
